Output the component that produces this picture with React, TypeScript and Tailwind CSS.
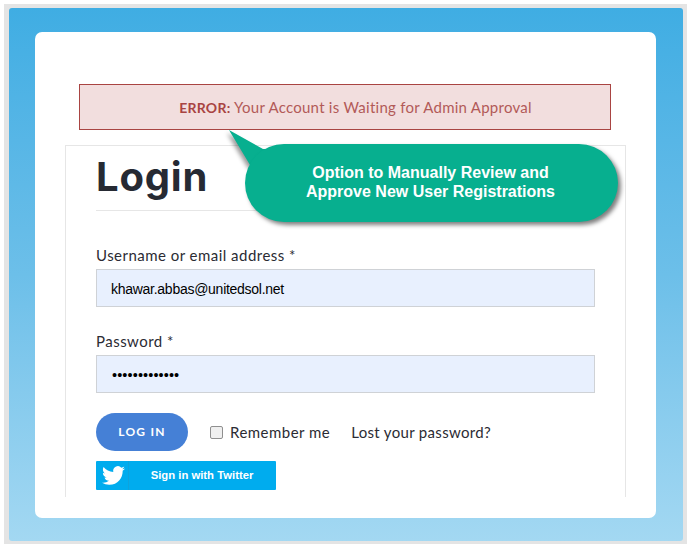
export default function App() {
  const body = { fontFamily: '"Lato", "Noto Sans", sans-serif' };
  return (
    <div className="w-[690px] h-[547px] bg-white pt-[4px] pl-[4px] overflow-hidden" style={body}>
      <div className="w-[683px] h-[540px] bg-[#e4e4e4] pt-[4px] pl-[5px]">
        <div className="relative w-[674px] h-[533px] rounded-[3px] bg-gradient-to-b from-[#3fade3] via-[#6cbfe9] to-[#a3d8f2] pt-[24px] pl-[26px]">
          <div className="w-[621px] h-[486px] bg-white rounded-[7px] pt-[52px] pl-[30px] overflow-hidden">
            <div className="ml-[14px] w-[532px] h-[46px] bg-[#f2dede] border border-[#a94442] flex items-center justify-center pl-[21px] text-[15px] tracking-[0.26px] text-[#b25a58]">
              <span><strong className="font-bold text-[14px] text-[#a94442]">ERROR:</strong> Your Account is Waiting for Admin Approval</span>
            </div>
            <div className="mt-[15px] w-[561px] h-[352px] border border-b-0 border-[#e6e6e6] pl-[30px] pr-[30px]">
              <div className="w-[499px] h-[65px] border-b border-[#e6e6e6] flex items-center">
                <h2 className="text-[40px] leading-none font-bold text-[#262a33] tracking-[0.8px] -mt-[2px]" style={{ fontFamily: 'Inter, sans-serif' }}>Login</h2>
              </div>
              <label className="block mt-[35px] text-[15px] leading-[18px] tracking-[0.47px] text-[#2b2b33]">Username or email address *</label>
              <div className="mt-[5px] w-[499px] h-[38px] bg-[#e8f0fe] border border-[#cfd2d6] flex items-center pl-[14px] pt-[3px] text-[14px] tracking-[-0.27px] text-black" style={{ fontFamily: '"Liberation Sans", sans-serif' }}>khawar.abbas@unitedsol.net</div>
              <label className="block mt-[25px] text-[15px] leading-[18px] tracking-[0.47px] text-[#2b2b33]">Password *</label>
              <div className="mt-[5px] w-[499px] h-[38px] bg-[#e8f0fe] border border-[#cfd2d6] flex items-center pl-[15px] pt-[3px] text-[14.5px] tracking-[0.1px] text-black" style={{ fontFamily: '"Liberation Sans", sans-serif' }}>•••••••••••••</div>
              <div className="mt-[20px] flex items-center h-[38px]">
                <button className="w-[92px] h-[38px] rounded-[19px] bg-[#4580d6] text-white text-[12px] font-bold tracking-[1.25px]">LOG IN</button>
                <span className="ml-[22px] w-[13px] h-[13px] rounded-[2px] border border-[#8f8f8f] bg-[#efefef]"></span>
                <span className="ml-[7px] text-[15px] tracking-[0.47px] text-[#2b2b33]">Remember me</span>
                <span className="ml-[21px] text-[15px] tracking-[0.33px] text-[#2b2b33]">Lost your password?</span>
              </div>
              <div className="mt-[10px] w-[180px] h-[29px] bg-[#00acee] flex items-center rounded-[1px]">
                <div className="w-[33px] h-full border-r border-[#0ea3dc] flex items-center justify-center">
                  <svg viewBox="0 0 24 24" width="23" height="23" fill="#fff" className="ml-[2px]"><path d="M23.95 4.57a10 10 0 0 1-2.82.78 4.96 4.96 0 0 0 2.16-2.72c-.95.56-2 .96-3.12 1.19a4.92 4.92 0 0 0-8.38 4.48C7.69 8.09 4.07 6.13 1.64 3.16a4.82 4.82 0 0 0-.67 2.48c0 1.71.87 3.21 2.19 4.1a4.9 4.9 0 0 1-2.23-.61v.06a4.92 4.92 0 0 0 3.95 4.83 5 5 0 0 1-2.21.08 4.94 4.94 0 0 0 4.6 3.42A9.87 9.87 0 0 1 0 19.54a14 14 0 0 0 7.56 2.21c9.05 0 14-7.5 14-13.98 0-.21 0-.42-.02-.63a9.94 9.94 0 0 0 2.46-2.55l-.05-.02z"/></svg>
                </div>
                <span className="flex-1 text-center text-white text-[11.3px] font-bold -ml-[1px]" style={{ fontFamily: '"Liberation Sans", sans-serif' }}>Sign in with Twitter</span>
              </div>
            </div>
          </div>
          <svg className="absolute left-[216px] top-[120px]" width="70" height="50" viewBox="0 0 70 50" style={{ filter: 'drop-shadow(-2px 3px 2px rgba(0,0,0,0.4))' }}>
            <path d="M4 2 L38 21 L60 21 L60 45 L25 37 Z" fill="#07af8f" />
          </svg>
          <div className="absolute left-[236px] top-[136px] w-[373px] h-[78px] rounded-[39px] bg-[#07af8f] shadow-[3px_3px_4px_rgba(0,0,0,0.5)] flex items-center justify-center text-center text-white text-[16px] leading-[19px] font-bold" style={{ fontFamily: '"Liberation Sans", sans-serif' }}>
            <span className="-mt-[2px] -ml-[2px]">Option to Manually Review and<br />Approve New User Registrations</span>
          </div>
        </div>
      </div>
    </div>
  );
}
